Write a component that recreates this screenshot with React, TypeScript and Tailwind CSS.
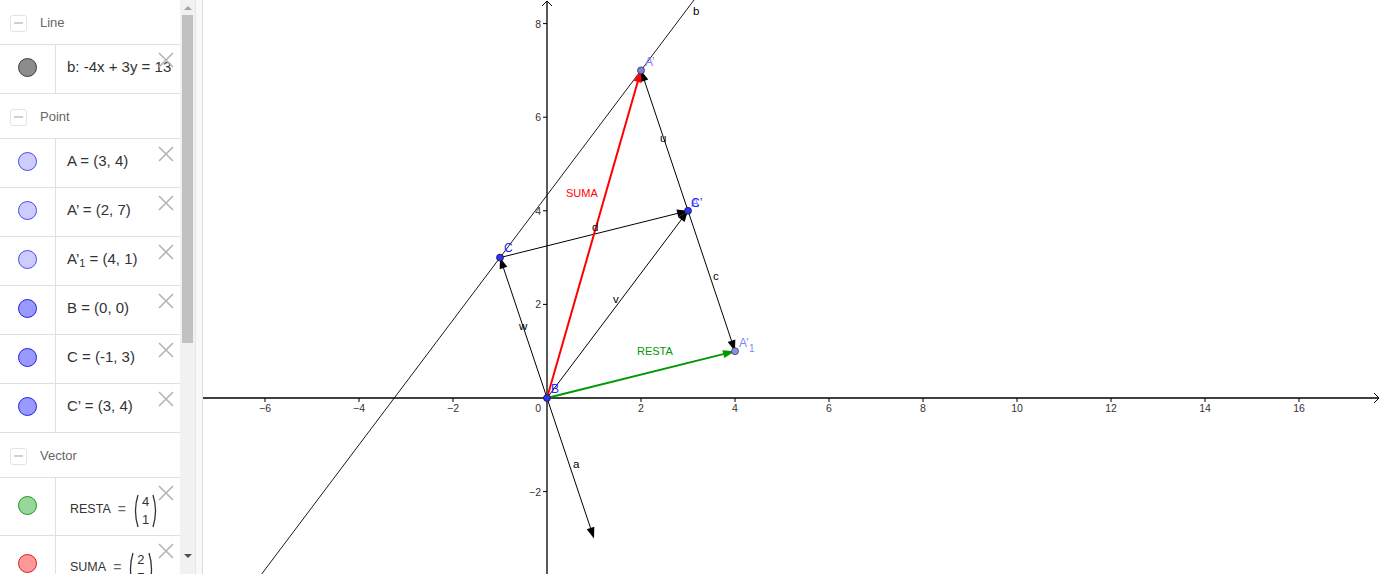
import React from 'react'

const X = (u: number) => 547 + 47 * u
const Y = (v: number) => 398 - 46.8 * v

function Arrow({
  from,
  to,
  color = '#000',
  width = 1,
  head = 11,
}: {
  from: [number, number]
  to: [number, number]
  color?: string
  width?: number
  head?: number
}) {
  const x1 = X(from[0])
  const y1 = Y(from[1])
  const x2 = X(to[0])
  const y2 = Y(to[1])
  const len = Math.hypot(x2 - x1, y2 - y1)
  const ux = (x2 - x1) / len
  const uy = (y2 - y1) / len
  const bx = x2 - ux * head
  const by = y2 - uy * head
  const hw = 4
  const pts = `${x2},${y2} ${bx - uy * hw},${by + ux * hw} ${bx + uy * hw},${by - ux * hw}`
  return (
    <g>
      <line x1={x1} y1={y1} x2={bx + ux * 2} y2={by + uy * 2} stroke={color} strokeWidth={width} />
      <polygon points={pts} fill={color} />
    </g>
  )
}

function Header({ title }: { title: string }) {
  return (
    <div className="h-[45px] border-b border-[#e0e0e0] flex items-center shrink-0 pt-[2px]">
      <div className="ml-[10px] w-[17px] h-[17px] rounded-[3px] border border-[#e4e4e4] flex items-center justify-center">
        <div className="w-[9px] h-[2px] bg-[#d0d0d0]" />
      </div>
      <span className="ml-[13px] text-[13px] text-[#666]">{title}</span>
    </div>
  )
}

function Row({
  fill,
  stroke,
  children,
  tall = false,
}: {
  fill: string
  stroke: string
  children: React.ReactNode
  tall?: boolean
}) {
  return (
    <div
      className={`relative flex border-b border-[#e0e0e0] shrink-0 ${tall ? 'h-[58px]' : 'h-[49px]'}`}
    >
      <div className={`w-[56px] border-r border-[#e0e0e0] flex items-center justify-center ${tall ? 'pb-[2px]' : 'pb-[3px]'}`}>
        <div
          className="w-[19px] h-[19px] rounded-full border"
          style={{ backgroundColor: fill, borderColor: stroke }}
        />
      </div>
      <div className="flex-1 flex items-center pl-[11px] pb-[3px] text-[15px] text-[#333] whitespace-nowrap">
        {children}
      </div>
      <svg className="absolute right-[6px] top-[7px]" width="16" height="16" viewBox="0 0 16 16">
        <path d="M1 1 L15 15 M15 1 L1 15" stroke="#b4b4b4" strokeWidth="1.6" />
      </svg>
    </div>
  )
}

function Paren({ right = false }: { right?: boolean }) {
  return (
    <svg width="6" height="34" viewBox="0 0 6 34">
      <path
        d={right ? 'M1 1 Q6 17 1 33' : 'M5 1 Q0 17 5 33'}
        fill="none"
        stroke="#333"
        strokeWidth="1.3"
      />
    </svg>
  )
}

function Matrix({ a, b }: { a: string; b: string }) {
  return (
    <span className="inline-flex items-center ml-[7px]">
      <Paren />
      <span className="flex flex-col items-center text-[13px] leading-[18px] px-[3px]">
        <span>{a}</span>
        <span>{b}</span>
      </span>
      <Paren right />
    </span>
  )
}

function VectorValue({ name, a, b }: { name: string; a: string; b: string }) {
  return (
    <span className="flex items-center pl-[3px] text-[12.5px] mt-[12px]">
      <span className="mb-[3px]">{name}</span>
      <span className="ml-[7px] mb-[3px] text-[14px] text-[#666]">=</span>
      <Matrix a={a} b={b} />
    </span>
  )
}

export default function App() {
  const xTicks = [-6, -4, -2, 2, 4, 6, 8, 10, 12, 14, 16]
  const yTicks = [8, 6, 4, 2, -2]
  const font = '"Liberation Sans", Arial, sans-serif'

  return (
    <div
      className="w-[1382px] h-[574px] flex overflow-hidden bg-white"
      style={{ fontFamily: font }}
    >
      {/* Algebra view */}
      <div className="w-[180px] h-full overflow-hidden flex flex-col">
        <Header title="Line" />
        <Row fill="#8c8c8c" stroke="#3c3c3c">
          <span>b: -4x + 3y = 13</span>
        </Row>
        <Header title="Point" />
        <Row fill="#ccccff" stroke="#4a4af0">A = (3, 4)</Row>
        <Row fill="#ccccff" stroke="#4a4af0">A’ = (2, 7)</Row>
        <Row fill="#ccccff" stroke="#4a4af0">
          <span>
            A’<sub className="text-[11px]">1</sub> = (4, 1)
          </span>
        </Row>
        <Row fill="#9999ff" stroke="#2020ee">B = (0, 0)</Row>
        <Row fill="#9999ff" stroke="#2020ee">C = (-1, 3)</Row>
        <Row fill="#9999ff" stroke="#2020ee">C’ = (3, 4)</Row>
        <Header title="Vector" />
        <Row fill="#99d699" stroke="#1a9a1a" tall>
          <VectorValue name="RESTA" a="4" b="1" />
        </Row>
        <Row fill="#ff9999" stroke="#e01818" tall>
          <VectorValue name="SUMA" a="2" b="7" />
        </Row>
      </div>

      {/* Scrollbar */}
      <div className="w-[15px] h-full bg-[#f1f1f1] flex flex-col items-center">
        <div className="h-[15px] flex items-center justify-center">
          <div className="w-0 h-0 border-l-[4px] border-r-[4px] border-b-[4px] border-l-transparent border-r-transparent border-b-[#a3a3a3]" />
        </div>
        <div className="w-[11px] h-[328px] bg-[#c1c1c1]" />
        <div className="flex-1" />
        <div className="h-[22px] flex items-start justify-center pt-[2px]">
          <div className="w-0 h-0 border-l-[4px] border-r-[4px] border-t-[4px] border-l-transparent border-r-transparent border-t-[#505050]" />
        </div>
      </div>

      {/* Splitter */}
      <div className="w-[8px] h-full bg-[#f8f8f8] border-l border-[#e6e6e6] border-r border-r-[#dedede]" />

      {/* Graphics view */}
      <div className="flex-1 h-full">
        <svg width="1179" height="574" viewBox="203 0 1179 574" style={{ fontFamily: font }}>
          {/* axes */}
          <line x1={203} y1={398} x2={1379} y2={398} stroke="#000" strokeWidth="1.3" />
          <path d="M1374 393 L1379 398 L1374 403" fill="none" stroke="#000" strokeWidth="1" />
          <line x1={547} y1={1} x2={547} y2={574} stroke="#000" strokeWidth="1.3" />
          <path d="M542 6 L547 1 L552 6" fill="none" stroke="#000" strokeWidth="1" />
          {xTicks.map((t) => (
            <g key={t}>
              <line x1={X(t)} y1={398} x2={X(t)} y2={402} stroke="#000" strokeWidth="1" />
              <text x={X(t)} y={412} fontSize="10.5" fill="#333" textAnchor="middle">
                {t < 0 ? `−${-t}` : t}
              </text>
            </g>
          ))}
          <text x={541} y={412} fontSize="10.5" fill="#333" textAnchor="end">
            0
          </text>
          {yTicks.map((t) => (
            <g key={t}>
              <line x1={543} y1={Y(t)} x2={547} y2={Y(t)} stroke="#000" strokeWidth="1" />
              <text x={541} y={Y(t) + 4} fontSize="10.5" fill="#333" textAnchor="end">
                {t < 0 ? `−${-t}` : t}
              </text>
            </g>
          ))}

          {/* line b */}
          <line x1={694} y1={0} x2={261.7} y2={574} stroke="#000" strokeWidth="0.9" />
          <text x={693} y={15} fontSize="11.5" fill="#000">
            b
          </text>

          {/* vectors */}
          <Arrow from={[3, 4]} to={[2, 7]} />
          <Arrow from={[3, 4]} to={[4, 1]} />
          <Arrow from={[0, 0]} to={[3, 4]} />
          <Arrow from={[-1, 3]} to={[3, 4]} />
          <Arrow from={[0, 0]} to={[-1, 3]} />
          <Arrow from={[0, 0]} to={[1, -3]} />
          <Arrow from={[0, 0]} to={[2, 7]} color="#ff0000" width={2} head={12} />
          <Arrow from={[0, 0]} to={[4, 1]} color="#009900" width={2} head={12} />

          {/* vector labels */}
          <text x={660} y={142} fontSize="11.5" fill="#000">u</text>
          <text x={592} y={231} fontSize="11.5" fill="#000">d</text>
          <text x={713} y={280} fontSize="11.5" fill="#000">c</text>
          <text x={613} y={303} fontSize="11.5" fill="#000">v</text>
          <text x={519} y={330} fontSize="11.5" fill="#000">w</text>
          <text x={573} y={468} fontSize="11.5" fill="#000">a</text>
          <text x={566} y={197} fontSize="11" fill="#ff0000">SUMA</text>
          <text x={637} y={355} fontSize="11" fill="#009900">RESTA</text>

          {/* points */}
          <circle cx={X(2)} cy={Y(7)} r="3.5" fill="#7f7fe6" stroke="#222" strokeWidth="0.7" />
          <circle cx={X(4)} cy={Y(1)} r="3.5" fill="#8c8cf0" stroke="#333" strokeWidth="0.7" />
          <circle cx={X(3)} cy={Y(4)} r="3.5" fill="#3030ff" stroke="#111" strokeWidth="0.7" />
          <circle cx={X(-1)} cy={Y(3)} r="3.5" fill="#3030ff" stroke="#111" strokeWidth="0.7" />
          <circle cx={X(0)} cy={Y(0)} r="3.5" fill="#3030ff" stroke="#111" strokeWidth="0.7" />

          {/* point labels */}
          <text x={645} y={66} fontSize="12" fill="#8080ff">A’</text>
          <text x={691} y={207} fontSize="12" fill="#8080ff">A</text>
          <text x={691} y={207} fontSize="12" fill="#2424ff">C’</text>
          <text x={504} y={252} fontSize="12" fill="#2424ff">C</text>
          <text x={551} y={393} fontSize="12" fill="#2424ff">B</text>
          <text x={739} y={347} fontSize="12" fill="#8080ff">A’</text>
          <text x={749} y={352} fontSize="10" fill="#8080ff">1</text>
        </svg>
      </div>
    </div>
  )
}
